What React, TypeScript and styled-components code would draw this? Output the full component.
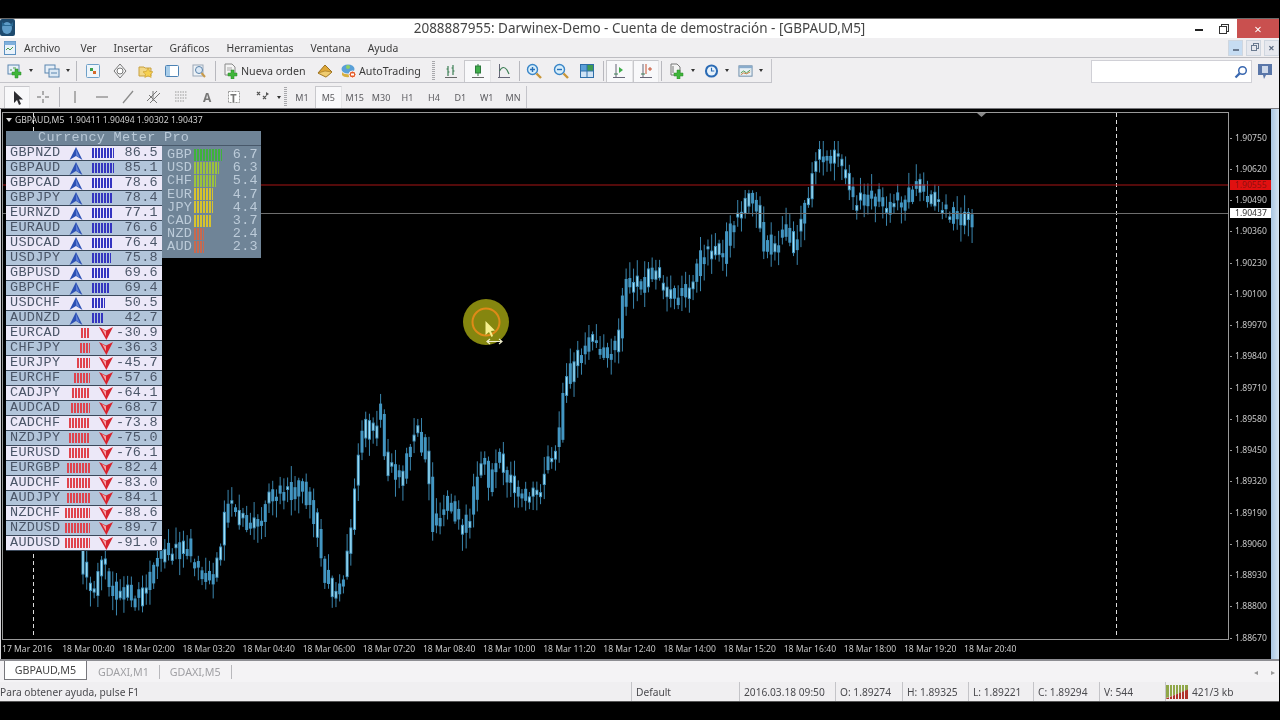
import React from 'react';
import styled, { createGlobalStyle } from 'styled-components';

const GlobalStyle = createGlobalStyle`
  html, body { margin: 0; padding: 0; background: #000; overflow: hidden; }
  * { box-sizing: border-box; }
`;

// data
const pairs: [string, number][] = [
  ['GBPNZD', 86.5], ['GBPAUD', 85.1], ['GBPCAD', 78.6], ['GBPJPY', 78.4], ['EURNZD', 77.1],
  ['EURAUD', 76.6], ['USDCAD', 76.4], ['USDJPY', 75.8], ['GBPUSD', 69.6], ['GBPCHF', 69.4],
  ['USDCHF', 50.5], ['AUDNZD', 42.7], ['EURCAD', -30.9], ['CHFJPY', -36.3], ['EURJPY', -45.7],
  ['EURCHF', -57.6], ['CADJPY', -64.1], ['AUDCAD', -68.7], ['CADCHF', -73.8], ['NZDJPY', -75.0],
  ['EURUSD', -76.1], ['EURGBP', -82.4], ['AUDCHF', -83.0], ['AUDJPY', -84.1], ['NZDCHF', -88.6],
  ['NZDUSD', -89.7], ['AUDUSD', -91.0],
];

const strengths: [string, string, number, string][] = [
  ['GBP', '6.7', 28, '#3fb23a'], ['USD', '6.3', 25, '#9cc23c'], ['CHF', '5.4', 22, '#9cc23c'],
  ['EUR', '4.7', 19, '#d6c32e'], ['JPY', '4.4', 19, '#d6c32e'], ['CAD', '3.7', 17, '#d6c32e'],
  ['NZD', '2.4', 10, '#c9694f'], ['AUD', '2.3', 10, '#c9694f'],
];

const prices = [
  '1.90750', '1.90620', '1.90490', '1.90360', '1.90230', '1.90100', '1.89970', '1.89840', '1.89710',
  '1.89580', '1.89450', '1.89320', '1.89190', '1.89060', '1.88930', '1.88800', '1.88670',
];

const times = [
  '17 Mar 2016', '18 Mar 00:40', '18 Mar 02:00', '18 Mar 03:20', '18 Mar 04:40', '18 Mar 06:00', '18 Mar 07:20',
  '18 Mar 08:40', '18 Mar 10:00', '18 Mar 11:20', '18 Mar 12:40', '18 Mar 14:00', '18 Mar 15:20', '18 Mar 16:40',
  '18 Mar 18:00', '18 Mar 19:20', '18 Mar 20:40',
];

// price path read off the chart, x / y in page pixels
const path: [number, number][] = [
  [83, 570], [92, 597], [103, 560], [112, 590], [125, 590], [138, 603], [147, 587], [157, 557], [167, 553], [180, 553],
  [187, 547], [197, 572], [213, 580], [223, 533], [228, 500], [240, 522], [263, 522], [268, 490], [283, 497], [303, 487],
  [315, 523], [322, 570], [333, 597], [342, 587], [350, 537], [357, 457], [363, 427], [372, 433], [382, 410], [385, 463],
  [403, 483], [408, 450], [418, 427], [428, 473], [433, 530], [447, 503], [467, 533], [475, 490], [483, 453], [488, 483],
  [500, 460], [518, 500], [540, 493], [550, 457], [558, 447], [563, 397], [573, 367], [587, 343], [607, 353], [618, 343],
  [625, 283], [640, 287], [650, 270], [672, 297], [692, 290], [700, 257], [723, 253], [737, 213], [753, 197], [763, 243],
  [773, 250], [788, 230], [795, 250], [802, 210], [810, 197], [813, 158], [833, 157], [845, 173], [853, 203], [867, 197],
  [887, 207], [900, 202], [917, 187], [930, 200], [940, 210], [953, 218], [965, 222], [973, 217],
];

const pathY = (x: number) => {
  for (let i = 1; i < path.length; i++) {
    if (x <= path[i][0]) {
      const [x0, y0] = path[i - 1];
      const [x1, y1] = path[i];
      return y0 + ((y1 - y0) * (x - x0)) / (x1 - x0);
    }
  }
  return path[path.length - 1][1];
};

const makeCandles = () => {
  let seed = 4711;
  const rnd = () => {
    seed = (seed * 16807) % 2147483647;
    return seed / 2147483647;
  };
  const out: { x: number; top: number; bottom: number; hi: number; lo: number; light: boolean }[] = [];
  for (let x = 83; x <= 973; x += 3.72) {
    const a = pathY(x - 3.72) + (rnd() - 0.5) * 16;
    const b = pathY(x) + (rnd() - 0.5) * 16;
    const top = Math.max(Math.min(a, b) - rnd() * 4, 150);
    const bottom = Math.max(a, b) + rnd() * 4;
    out.push({
      x,
      top,
      bottom,
      hi: Math.max(top - 2 - rnd() * 15, 142),
      lo: Math.min(bottom + 2 + rnd() * 15, 627),
      light: rnd() > 0.55,
    });
  }
  return out;
};

const candles = makeCandles();

const CandleChart = () => (
  <ChartSvg viewBox="3 114 1225 525">
    <line x1="33.5" x2="33.5" y1="114" y2="640" stroke="#ddd" strokeDasharray="4 3" />
    <line x1="1116.5" x2="1116.5" y1="114" y2="640" stroke="#ddd" strokeDasharray="4 3" />
    {candles.map((c) => (
      <g key={c.x}>
        <line x1={c.x} x2={c.x} y1={c.hi} y2={c.lo} stroke="#3a86ae" strokeWidth="1" />
        <rect x={c.x - 1.5} y={c.top} width="3" height={c.bottom - c.top} fill="#4396c2" />
        {c.light && <rect x={c.x - 0.6} y={c.top + 1} width="1.2" height={Math.max(c.bottom - c.top - 2, 1)} fill="#a4e2f8" />}
      </g>
    ))}
    <line x1="3" x2="1228" y1="186" y2="186" stroke="#a81414" strokeWidth="1.2" />
    <line x1="3" x2="1228" y1="214.5" y2="214.5" stroke="#6e6e6e" />
    <polygon points="977,114 986,114 981.5,118" fill="#8a8a8a" />
    <circle cx="486" cy="323" r="23" fill="#85860f" />
    <circle cx="486" cy="323" r="13.5" fill="none" stroke="#df8a18" strokeWidth="2" />
    <polygon points="485.5,322 485.5,336 489,333 491.5,338 493,337 491,332 495,331.5" fill="#f6f08e" />
    <path d="M488 342.5h13M490 340l-3 2.5 3 2.5M499 340l3 2.5-3 2.5" fill="none" stroke="#f3f1cf" strokeWidth="1.2" />
  </ChartSvg>
);

// icons
const Svg = ({ children, w = 16 }: { children: React.ReactNode; w?: number }) => (
  <svg width={w} height="16" viewBox={`0 0 ${w} 16`}>{children}</svg>
);

const GreenPlus = ({ x = 8, y = 8 }: { x?: number; y?: number }) => (
  <path d={`M${x + 2} ${y - 1}h3v3h3v3h-3v3h-3v-3h-3v-3h3z`} fill="#3fb53a" stroke="#2a8a2a" strokeWidth=".5" />
);

const NewChartIcon = () => (
  <Svg>
    <rect x="1" y="2" width="11" height="9" fill="#e8f0f8" stroke="#5a86b0" />
    <path d="M3 7h2M6 5h3" stroke="#4a9a4a" />
    <GreenPlus x={6} y={7} />
  </Svg>
);
const ProfileIcon = () => (
  <Svg>
    <rect x="1" y="2" width="10" height="8" fill="#e8f0f8" stroke="#5a86b0" />
    <rect x="5" y="6" width="10" height="8" fill="#dbe8f4" stroke="#5a86b0" />
    <path d="M7 10h6" stroke="#5a86b0" />
  </Svg>
);
const WatchIcon = () => (
  <Svg>
    <rect x="1.5" y="1.5" width="13" height="13" rx="1" fill="#eef5fb" stroke="#6ea0c8" />
    <rect x="5" y="5" width="3" height="3" fill="#3aa04a" />
    <rect x="8" y="8" width="3" height="3" fill="#d66a2a" />
  </Svg>
);
const CrossIcon = () => (
  <Svg>
    <path d="M8 1l6 7-6 7-6-7z" fill="#f4f4f6" stroke="#777" />
    <circle cx="8" cy="8" r="3" fill="#fff" stroke="#777" />
  </Svg>
);
const FoldersIcon = () => (
  <Svg>
    <path d="M1 4h5l1 1h6v8H1z" fill="#f2d888" stroke="#c8a040" />
    <path d="M10 5l1.6 3.4 3.4.4-2.5 2.3.7 3.4-3.2-1.7-3.2 1.7.7-3.4L5 8.8l3.4-.4z" fill="#f6d050" stroke="#c89a28" strokeWidth=".6" />
  </Svg>
);
const NavIcon = () => (
  <Svg>
    <rect x="1.5" y="2.5" width="13" height="11" rx="1" fill="#fff" stroke="#4c82b4" />
    <rect x="2" y="3" width="4" height="10" fill="#a8cdea" />
  </Svg>
);
const TesterIcon = () => (
  <Svg>
    <rect x="2" y="2" width="10" height="11" fill="#eef2f6" stroke="#9aa8b8" />
    <circle cx="8" cy="7" r="3.5" fill="#dce9f6" stroke="#5a82aa" />
    <path d="M10.5 10l3.5 4" stroke="#c89a4a" strokeWidth="2" />
  </Svg>
);
const OrderIcon = () => (
  <Svg>
    <path d="M2 1h7l3 3v8H2z" fill="#f4f4f4" stroke="#888" />
    <path d="M4 5h5M4 7h5" stroke="#aaa" />
    <GreenPlus x={6} y={8} />
  </Svg>
);
const GoldIcon = () => (
  <Svg>
    <path d="M1 10l7-8 7 7-6 5z" fill="#dfa838" stroke="#9a7020" />
    <path d="M1 10l8 4 6-5-7-1z" fill="#f0cc70" stroke="#9a7020" strokeWidth=".6" />
  </Svg>
);
const AutoIcon = () => (
  <Svg>
    <ellipse cx="7" cy="6" rx="6.5" ry="4.5" fill="#5aa0d8" />
    <path d="M1 9c2 3 9 3 11 0v3c-2 3-9 3-11 0z" fill="#d8b040" />
    <circle cx="7" cy="4" r="2" fill="#8ed060" />
    <circle cx="11.5" cy="11.5" r="3.5" fill="#e45a28" stroke="#fff" />
    <rect x="10" y="10.5" width="3" height="2" fill="#fff" />
  </Svg>
);
const BarsIcon = () => (
  <Svg>
    <path d="M2 14.5h12" stroke="#666" />
    <path d="M5 3v10M3.5 6H5M5 9h1.5M10 2v10M8.5 5H10M10 8h1.5" stroke="#3d7f55" strokeWidth="1.2" />
  </Svg>
);
const CandleIcon = () => (
  <Svg>
    <path d="M2 14.5h12" stroke="#666" />
    <path d="M8 1v12" stroke="#2d7a3d" />
    <rect x="5.5" y="3" width="5" height="7" fill="#3fae4a" stroke="#2d7a3d" />
  </Svg>
);
const LineIcon = () => (
  <Svg>
    <path d="M2 14.5h12M3.5 1v13" stroke="#667" />
    <path d="M3.5 8C6 3 9 4 11 7l2 4" fill="none" stroke="#3d7f55" strokeWidth="1.2" />
  </Svg>
);
const ZoomIcon = ({ plus }: { plus?: boolean }) => (
  <Svg>
    <circle cx="6.5" cy="6.5" r="5" fill="#d8eefa" stroke="#3a86c8" strokeWidth="1.4" />
    <path d="M10.5 10.5L15 15" stroke="#c8963a" strokeWidth="2.4" />
    <path d={plus ? 'M4 6.5h5M6.5 4v5' : 'M4 6.5h5'} stroke="#2a70b8" strokeWidth="1.4" />
  </Svg>
);
const TileIcon = () => (
  <Svg>
    <rect x="1" y="1" width="14" height="14" fill="#2f6ea8" />
    <rect x="2" y="2" width="5.5" height="5.5" fill="#5b9fd8" />
    <rect x="8.5" y="2" width="5.5" height="5.5" fill="#3f9a52" />
    <rect x="2" y="8.5" width="5.5" height="5.5" fill="#cfe3f5" />
    <rect x="8.5" y="8.5" width="5.5" height="5.5" fill="#cfe3f5" />
  </Svg>
);
const ShiftIcon = ({ plus }: { plus?: boolean }) => (
  <Svg>
    <path d="M2 14.5h12M5 1v13" stroke="#667" />
    <path d="M3 11h4" stroke="#3d7f55" />
    {plus ? <path d="M8 1v10M10 6h4M12 4v4" stroke="#c85030" /> : <path d="M8 4l4 3-4 3z" fill="#3fae4a" />}
  </Svg>
);
const NewDocIcon = () => (
  <Svg>
    <path d="M2 1h6l3 3v8H2z" fill="#f4f4f4" stroke="#777" />
    <path d="M4 3v7" stroke="#777" />
    <GreenPlus x={6} y={8} />
  </Svg>
);
const ClockIcon = () => (
  <Svg>
    <circle cx="8" cy="8" r="7" fill="#2a6ab4" />
    <circle cx="8" cy="8" r="4.8" fill="#e8f2fb" />
    <path d="M8 4.5V8h3" fill="none" stroke="#2a6ab4" strokeWidth="1.2" />
  </Svg>
);
const TemplateIcon = () => (
  <Svg>
    <rect x="1" y="2.5" width="14" height="11" fill="#e8f0f6" stroke="#6a8aa8" />
    <rect x="1" y="2.5" width="14" height="2.5" fill="#8aaccc" />
    <path d="M3 10l3-2 3 2 4-3" fill="none" stroke="#4a9a4a" />
    <path d="M3 12l3-2 3 1 4-2" fill="none" stroke="#c87a3a" />
  </Svg>
);
const PointerIcon = () => (
  <Svg>
    <path d="M5 1v12l3-3 2 5 2-1-2-4.6h4z" fill="#2c2c30" />
  </Svg>
);
const GraphCross = () => (
  <Svg>
    <path d="M8 2v4M8 10v4M2 8h4M10 8h4" stroke="#666" />
  </Svg>
);
const DrawLine = ({ d }: { d: string }) => (
  <Svg>
    <path d={d} stroke="#8a8a8a" strokeWidth="1.3" fill="none" />
  </Svg>
);
const ChannelIcon = () => (
  <Svg>
    <path d="M1 12L11 2M4 14L14 4M3 6l8 8M7 2v10" stroke="#777" fill="none" />
  </Svg>
);
const FiboIcon = () => (
  <Svg>
    <path d="M2 3h12M2 6h12M2 9h12M2 12h9" stroke="#999" strokeDasharray="1.5 1" fill="none" />
  </Svg>
);
const TextBoxIcon = () => (
  <Svg>
    <rect x="2.5" y="2.5" width="11" height="11" fill="#fff" stroke="#999" strokeDasharray="2 1" />
  </Svg>
);
const ShapesIcon = () => (
  <Svg>
    <path d="M2 3l3 3M5 3L2 6M8 7l3 3M11 7l-3 3" stroke="#555" strokeWidth="1.3" />
    <path d="M11 3l3 2-3 2z" fill="#555" />
  </Svg>
);
const MdiAppIcon = () => (
  <Svg>
    <rect x="2.5" y="1.5" width="11" height="13" fill="#eaf2fa" stroke="#5a90c0" />
    <rect x="2.5" y="1.5" width="11" height="3.5" fill="#7fb0dc" />
    <path d="M4 10l2-2 2 2 3-3" fill="none" stroke="#4a9a4a" />
  </Svg>
);
const AppLogo = () => (
  <svg width="15" height="17" viewBox="0 0 15 17">
    <rect x="0" y="0" width="15" height="17" rx="2" fill="#1d4a6e" />
    <ellipse cx="7" cy="9" rx="5" ry="6" fill="#5e9cc8" />
    <path d="M2 3l3 3h5l3-3v4H2z" fill="#2a6a94" />
  </svg>
);
const ChatBadge = () => (
  <svg width="16" height="18" viewBox="0 0 16 18">
    <path d="M1 1h14v11H9l-2 4-1-4H1z" fill="#5a76a8" />
    <rect x="5" y="3" width="6" height="7" fill="#cfd9ea" />
  </svg>
);
const SearchGlyph = () => (
  <svg width="14" height="14" viewBox="0 0 14 14">
    <circle cx="8.5" cy="5.5" r="3.8" fill="#fff" stroke="#3a68b0" strokeWidth="1.5" />
    <path d="M5.6 8.4L1.5 12.5" stroke="#3a68b0" strokeWidth="2.2" />
  </svg>
);
const ArrowUp = () => (
  <svg width="14" height="13" viewBox="0 0 14 13">
    <path d="M7 0l6.5 13L7 9 .5 13z" fill="#2c50b4" />
    <path d="M7 2v6.6l3.6 2.2z" fill="#5f7fd6" />
  </svg>
);
const ArrowDown = () => (
  <svg width="14" height="14" viewBox="0 0 14 14">
    <path d="M0 1l7 3.4L14 1 7.4 14z" fill="#d8242e" />
    <path d="M3 3l4 2.2v5z" fill="#f3a2a6" />
  </svg>
);
const NetBars = () => (
  <svg width="22" height="14" viewBox="0 0 22 14">
    <path d="M0 0h22v5L0 13z" fill="#7f9a2c" opacity=".85" />
    <path d="M0 13.5l22-9V14H0z" fill="#b0322a" />
    {[3, 6, 9, 12, 15, 18].map((x) => (
      <rect key={x} x={x} y="0" width="1" height="14" fill="#f0eff1" />
    ))}
  </svg>
);

// layout
const Page = styled.div`
  width: 1280px;
  height: 720px;
  background: #000;
  display: flex;
  flex-direction: column;
  font-family: 'Noto Sans', 'Liberation Sans', sans-serif;
  filter: blur(0.45px);
  overflow: hidden;
`;

const Letterbox = styled.div<{ $h: number }>`
  height: ${({ $h }) => $h}px;
  flex: none;
  background: #000;
`;

const AppWindow = styled.div`
  flex: 1;
  width: 1279px;
  display: flex;
  flex-direction: column;
  background: #f0eff1;
  border-top: 1px solid #6c6c6c;
  border-bottom: 1px solid #555;
  min-height: 0;
`;

const TitleBar = styled.div`
  height: 19px;
  flex: none;
  background: #fff;
  display: flex;
  align-items: stretch;
  position: relative;
`;

const TitleText = styled.div`
  text-align: center;
  font-size: 13.5px;
  line-height: 19px;
  color: #444;
  position: absolute;
  left: 0;
  right: 0;
`;

const LogoSlot = styled.div`
  width: 15px;
  z-index: 1;
`;

const WinControls = styled.div`
  margin-left: auto;
  display: flex;
  align-items: stretch;
  z-index: 1;
`;

const WinBtn = styled.div<{ $close?: boolean }>`
  width: ${({ $close }) => ($close ? '42px' : '24px')};
  display: flex;
  align-items: center;
  justify-content: center;
  padding-right: ${({ $close }) => ($close ? 0 : 4)}px;
  background: ${({ $close }) => ($close ? '#c9504f' : 'transparent')};
  color: ${({ $close }) => ($close ? '#fff' : '#222')};
  font-size: 13px;
`;

const MinGlyph = styled.span`
  width: 8px;
  height: 2px;
  margin-top: 3px;
  background: #222;
`;

const RestoreGlyph = styled.span`
  width: 8px;
  height: 8px;
  margin-top: 2px;
  border: 1px solid #333;
  box-shadow: 2px -2px 0 -1px #f8f8f8, 2px -2px 0 0 #333;
`;

const MenuBar = styled.div`
  height: 20px;
  flex: none;
  display: flex;
  align-items: center;
  border-bottom: 1px solid #bdbdc2;
  padding-left: 2px;
  font-size: 10.4px;
  color: #3c3c3c;
  gap: 17px;
`;

const MenuIcon = styled.div`
  width: 16px;
  height: 16px;
  margin-right: -11px;
`;

const FirstMenu = styled.span`
  margin-right: 3px;
`;

const MdiControls = styled.div`
  margin-left: auto;
  display: flex;
  gap: 3px;
`;

const MdiBtn = styled.div<{ $plain?: boolean }>`
  width: 15px;
  height: 16px;
  display: flex;
  align-items: center;
  justify-content: center;
  background: ${({ $plain }) => ($plain ? '#e6e8ee' : '#c6dcf2')};
  border: 1px solid #cfd6df;
  color: #5a6a80;
  font-size: 11px;
  font-weight: 700;
`;

const MdiDash = styled.span`
  width: 6px;
  height: 2px;
  margin-top: 5px;
  background: #6a7a90;
`;

const MdiRestore = styled.span`
  width: 6px;
  height: 6px;
  border: 1px solid #6a7a90;
  box-shadow: 2px -2px 0 -1px #e6e8ee, 2px -2px 0 0 #6a7a90;
`;

const ToolbarRow = styled.div<{ $h: number; $top: number; $dark?: boolean }>`
  height: ${({ $h }) => $h}px;
  flex: none;
  display: flex;
  align-items: stretch;
  padding-top: ${({ $top }) => $top}px;
  border-bottom: 1px solid ${({ $dark }) => ($dark ? '#77777c' : '#f0eff1')};
`;

const Toolbar = styled.div<{ $pad: number; $w: number; $line?: boolean }>`
  width: ${({ $w }) => $w}px;
  display: flex;
  align-items: center;
  padding-left: ${({ $pad }) => $pad}px;
  border-right: 1px solid #c4c4ca;
  border-bottom: ${({ $line }) => ($line ? '1px solid #c4c4ca' : 'none')};
`;

const ToolBtn = styled.div<{ $w?: number; $pressed?: boolean; $pl?: number }>`
  flex: none;
  width: ${({ $w = 26.4 }) => $w}px;
  height: 22px;
  display: flex;
  align-items: center;
  justify-content: ${({ $pl }) => ($pl != null ? 'flex-start' : 'center')};
  padding-left: ${({ $pl = 0 }) => $pl}px;
  gap: 2px;
  font-size: 10.7px;
  color: #3c3c3c;
  white-space: nowrap;
  ${({ $pressed }) =>
    $pressed &&
    `background: #f8f8fa;
     border-top: 1px solid #c8c8cc;
     border-left: 1px solid #c8c8cc;
     border-right: 1px solid #e4e4e6;`}
`;

const PeriodLabel = styled.span`
  font-size: 9px;
  color: #5c5c60;
`;

const DrawA = styled.span`
  font-size: 12px;
  font-weight: 700;
  color: #777;
`;

const TextT = styled.span`
  position: absolute;
  font-size: 11px;
  font-weight: 700;
  color: #777;
`;

const Caret = styled.span`
  width: 0;
  height: 0;
  border-left: 2.5px solid transparent;
  border-right: 2.5px solid transparent;
  border-top: 3px solid #333;
  margin-left: 4px;
`;

const Sep = styled.div<{ $w?: number; $grip?: boolean }>`
  flex: none;
  width: ${({ $w = 6 }) => $w}px;
  height: 20px;
  display: flex;
  justify-content: center;
  &::after {
    content: '';
    width: ${({ $grip }) => ($grip ? '3px' : '1px')};
    background: ${({ $grip }) =>
      $grip ? 'repeating-linear-gradient(to bottom, #a8a8ac 0 1px, transparent 1px 2px)' : '#b8b8be'};
  }
`;

const SearchBox = styled.div`
  position: absolute;
  left: 1091px;
  top: 60px;
  width: 161px;
  height: 23px;
  background: #fff;
  border: 1px solid #d0d0d6;
  display: flex;
  align-items: center;
  justify-content: flex-end;
  padding-right: 3px;
`;

const ChatSlot = styled.div`
  position: absolute;
  left: 1257px;
  top: 63px;
`;

const ChartRow = styled.div`
  flex: 1;
  display: flex;
  min-height: 0;
`;

const ChartArea = styled.div`
  flex: 1;
  background: #000;
  display: grid;
  grid-template-columns: 1228px 1fr;
  grid-template-rows: 528px 1fr;
  padding: 3px 0 0 1px;
  border-left: 1px solid #d8d8dc;
`;

const ScrollStrip = styled.div`
  width: 8px;
  flex: none;
  background: linear-gradient(to right, #a9c6e2, #d5e4f2);
`;

const Plot = styled.div`
  position: relative;
  width: 1227px;
  border: 1px solid #9a9a9a;
`;

const ChartSvg = styled.svg`
  position: absolute;
  left: 0;
  top: 0;
  width: 1225px;
  height: 525px;
`;

const ChartHeader = styled.div`
  position: absolute;
  left: 3px;
  top: 1px;
  display: flex;
  align-items: center;
  gap: 3px;
  font-size: 8.6px;
  line-height: 12px;
  color: #d0d0d0;
  white-space: nowrap;
`;

const HeaderCaret = styled.span`
  width: 0;
  height: 0;
  border-left: 3.5px solid transparent;
  border-right: 3.5px solid transparent;
  border-top: 4px solid #ddd;
`;

const Meter = styled.div`
  position: absolute;
  left: 3px;
  top: 18px;
  width: 255px;
  font-family: 'Liberation Mono', monospace;
`;

const MeterTitle = styled.div`
  height: 15px;
  background: #6f8497;
  color: #b9c9d8;
  font-size: 13.5px;
  letter-spacing: 0.3px;
  line-height: 14px;
  padding-left: 32px;
  border-bottom: 1px solid #48586a;
`;

const MeterBody = styled.div`
  display: flex;
  align-items: flex-start;
`;

const PairList = styled.div`
  width: 156px;
  flex: none;
  background: #2a3442;
`;

const PairRow = styled.div<{ $alt: boolean }>`
  height: 15px;
  display: grid;
  grid-template-columns: 55px 25px 26px 1fr;
  align-items: center;
  padding: 0 4px 1px 4px;
  border-bottom: 1px solid #3c4a5c;
  background: ${({ $alt }) => ($alt ? '#b2c5da' : '#ece8f8')};
  color: #4b5668;
  font-size: 13.5px;
  letter-spacing: 0.3px;
  line-height: 14px;
`;

const SlotLeft = styled.div`
  display: flex;
  justify-content: flex-end;
  align-items: center;
`;

const SlotRight = styled.div`
  display: flex;
  align-items: center;
  padding-left: 2px;
`;

const Value = styled.div`
  text-align: right;
  white-space: nowrap;
`;

const Ticks = styled.div<{ $w: number; $c: string; $h?: number }>`
  width: ${({ $w }) => $w}px;
  height: ${({ $h = 10 }) => $h}px;
  background: repeating-linear-gradient(to right, ${({ $c }) => $c} 0 2px, transparent 2px 3px);
`;

const ArrowSlot = styled.div<{ $left: number }>`
  display: flex;
  padding-left: ${({ $left }) => $left}px;
`;

const StrengthPanel = styled.div`
  flex: 1;
  background: #6f8497;
  color: #bccbd9;
  padding: 2px 3px 4px 5px;
  font-size: 13.5px;
  letter-spacing: 0.3px;
`;

const StrengthRow = styled.div`
  height: 13.2px;
  display: grid;
  grid-template-columns: 27px 1fr auto;
  align-items: center;
  line-height: 13px;
`;

const PriceAxis = styled.div`
  position: relative;
  padding-top: 10px;
`;

const PriceTick = styled.div`
  height: 31.25px;
  display: flex;
  align-items: center;
  font-size: 8.6px;
  color: #c8c8c8;
  padding-left: 5px;
  position: relative;
  &::before {
    content: '';
    position: absolute;
    left: 0;
    top: 50%;
    width: 2px;
    height: 1px;
    background: #999;
  }
`;

const PriceTag = styled.div<{ $top: number; $bg: string; $fg: string }>`
  position: absolute;
  left: 0;
  top: ${({ $top }) => $top}px;
  width: 41px;
  height: 10px;
  background: ${({ $bg }) => $bg};
  color: ${({ $fg }) => $fg};
  font-size: 8.6px;
  line-height: 10px;
  padding-left: 5px;
`;

const TimeAxis = styled.div`
  display: flex;
  grid-column: 1 / 3;
  padding-top: 2px;
`;

const TimeTick = styled.div`
  width: 60.13px;
  flex: none;
  font-size: 8.6px;
  line-height: 12px;
  padding-top: 1px;
  color: #c8c8c8;
  white-space: nowrap;
`;

const TabBar = styled.div`
  height: 23px;
  flex: none;
  display: flex;
  align-items: center;
  background: #f4f3f5;
  border-top: 2px solid #8d8d92;
  padding-left: 4px;
  font-size: 10.7px;
  color: #a0a0a4;
`;

const ActiveTab = styled.div`
  width: 83px;
  height: 19px;
  margin-top: -2px;
  background: #fff;
  color: #444;
  border: 1px solid #77777c;
  border-top: none;
  text-align: center;
  line-height: 18px;
  margin-right: 11px;
`;

const Tab = styled.div`
  margin-right: 10px;
`;

const TabSep = styled.div`
  width: 1px;
  height: 14px;
  background: #b8b8bc;
  margin-right: 10px;
`;

const TabArrows = styled.div`
  margin-left: auto;
  display: flex;
  gap: 13px;
  padding-right: 4px;
  font-size: 8px;
  color: #999;
`;

const StatusBar = styled.div`
  height: 19px;
  flex: none;
  display: flex;
  align-items: center;
  font-size: 10.2px;
  color: #4a4a4e;
  background: #f0eff1;
  white-space: nowrap;
`;

const StatusHelp = styled.div`
  width: 631px;
  flex: none;
`;

const StatusCell = styled.div<{ $w: number; $pl?: number }>`
  width: ${({ $w }) => $w}px;
  flex: none;
  height: 100%;
  display: flex;
  align-items: center;
  gap: 4px;
  padding-left: ${({ $pl = 4 }) => $pl}px;
  border-left: 1px solid #c4c4c8;
`;

const TopLeftTools = () => (
  <Toolbar $pad={6} $w={772} $line>
    <ToolBtn $w={30} $pl={1}><NewChartIcon /><Caret /></ToolBtn>
    <ToolBtn $w={36} $pl={8}><ProfileIcon /><Caret /></ToolBtn>
    <Sep $w={8} />
    <ToolBtn><WatchIcon /></ToolBtn>
    <ToolBtn><CrossIcon /></ToolBtn>
    <ToolBtn><FoldersIcon /></ToolBtn>
    <ToolBtn><NavIcon /></ToolBtn>
    <ToolBtn><TesterIcon /></ToolBtn>
    <Sep $w={8} />
    <ToolBtn $w={92} $pl={3}><OrderIcon />Nueva orden</ToolBtn>
    <ToolBtn $w={26}><GoldIcon /></ToolBtn>
    <ToolBtn $w={92} $pl={3}><AutoIcon />AutoTrading</ToolBtn>
    <Sep $w={8} $grip />
    <ToolBtn><BarsIcon /></ToolBtn>
    <ToolBtn $pressed><CandleIcon /></ToolBtn>
    <ToolBtn><LineIcon /></ToolBtn>
    <Sep $w={4} />
    <ToolBtn><ZoomIcon plus /></ToolBtn>
    <ToolBtn><ZoomIcon /></ToolBtn>
    <ToolBtn><TileIcon /></ToolBtn>
    <Sep />
    <ToolBtn $pressed><ShiftIcon /></ToolBtn>
    <ToolBtn $pressed><ShiftIcon plus /></ToolBtn>
    <Sep $w={4} />
    <ToolBtn $w={33} $pl={6}><NewDocIcon /><Caret /></ToolBtn>
    <ToolBtn $w={33} $pl={8}><ClockIcon /><Caret /></ToolBtn>
    <ToolBtn $w={34} $pl={9}><TemplateIcon /><Caret /></ToolBtn>
  </Toolbar>
);

const LowerTools = () => (
  <Toolbar $pad={4} $w={527}>
    <ToolBtn $w={26} $pressed><PointerIcon /></ToolBtn>
    <ToolBtn $w={26}><GraphCross /></ToolBtn>
    <Sep />
    <ToolBtn><DrawLine d="M8 2v12" /></ToolBtn>
    <ToolBtn><DrawLine d="M2 8h12" /></ToolBtn>
    <ToolBtn><DrawLine d="M3 14L13 2" /></ToolBtn>
    <ToolBtn><ChannelIcon /></ToolBtn>
    <ToolBtn><FiboIcon /></ToolBtn>
    <ToolBtn><DrawA>A</DrawA></ToolBtn>
    <ToolBtn><TextBoxIcon /><TextT>T</TextT></ToolBtn>
    <ToolBtn $w={36} $pl={8}><ShapesIcon /><Caret /></ToolBtn>
    <Sep $grip />
    {['M1', 'M5', 'M15', 'M30', 'H1', 'H4', 'D1', 'W1', 'MN'].map((p) => (
      <ToolBtn key={p} $pressed={p === 'M5'}><PeriodLabel>{p}</PeriodLabel></ToolBtn>
    ))}
  </Toolbar>
);

export default function App() {
  return (
    <Page>
      <GlobalStyle />
      <Letterbox $h={18} />
      <AppWindow>
        <TitleBar>
          <LogoSlot><AppLogo /></LogoSlot>
          <TitleText>2088887955: Darwinex-Demo - Cuenta de demostración - [GBPAUD,M5]</TitleText>
          <WinControls>
            <WinBtn><MinGlyph /></WinBtn>
            <WinBtn><RestoreGlyph /></WinBtn>
            <WinBtn $close>×</WinBtn>
          </WinControls>
        </TitleBar>
        <MenuBar>
          <MenuIcon><MdiAppIcon /></MenuIcon>
          <FirstMenu>Archivo</FirstMenu>
          <span>Ver</span>
          <span>Insertar</span>
          <span>Gráficos</span>
          <span>Herramientas</span>
          <span>Ventana</span>
          <span>Ayuda</span>
          <MdiControls>
            <MdiBtn><MdiDash /></MdiBtn>
            <MdiBtn $plain><MdiRestore /></MdiBtn>
            <MdiBtn $plain>×</MdiBtn>
          </MdiControls>
        </MenuBar>
        <ToolbarRow $h={26} $top={1}><TopLeftTools /></ToolbarRow>
        <ToolbarRow $h={25} $top={2} $dark><LowerTools /></ToolbarRow>
        <SearchBox><SearchGlyph /></SearchBox>
        <ChatSlot><ChatBadge /></ChatSlot>
        <ChartRow>
          <ChartArea>
            <Plot>
              <CandleChart />
              <ChartHeader>
                <HeaderCaret />
                GBPAUD,M5&nbsp; 1.90411 1.90494 1.90302 1.90437
              </ChartHeader>
              <Meter>
                <MeterTitle>Currency Meter Pro</MeterTitle>
                <MeterBody>
                  <PairList>
                    {pairs.map(([name, v], i) => (
                      <PairRow key={name} $alt={i % 2 === 1}>
                        <span>{name}</span>
                        {v > 0 ? (
                          <>
                            <ArrowSlot $left={4}><ArrowUp /></ArrowSlot>
                            <SlotRight><Ticks $w={Math.round(v / 3.9)} $c="#3535c0" /></SlotRight>
                          </>
                        ) : (
                          <>
                            <SlotLeft><Ticks $w={Math.round(-v / 3.6)} $c="#e0444e" /></SlotLeft>
                            <ArrowSlot $left={9}><ArrowDown /></ArrowSlot>
                          </>
                        )}
                        <Value>{v.toFixed(1)}</Value>
                      </PairRow>
                    ))}
                  </PairList>
                  <StrengthPanel>
                    {strengths.map(([cur, val, w, c]) => (
                      <StrengthRow key={cur}>
                        <span>{cur}</span>
                        <Ticks $w={w} $c={c} $h={12} />
                        <span>{val}</span>
                      </StrengthRow>
                    ))}
                  </StrengthPanel>
                </MeterBody>
              </Meter>
            </Plot>
            <PriceAxis>
              {prices.map((p) => (
                <PriceTick key={p}>{p}</PriceTick>
              ))}
              <PriceTag $top={68} $bg="#e01010" $fg="#8c1010">1.90555</PriceTag>
              <PriceTag $top={96} $bg="#fff" $fg="#333">1.90437</PriceTag>
            </PriceAxis>
            <TimeAxis>
              {times.map((t) => (
                <TimeTick key={t}>{t}</TimeTick>
              ))}
            </TimeAxis>
          </ChartArea>
          <ScrollStrip />
        </ChartRow>
        <TabBar>
          <ActiveTab>GBPAUD,M5</ActiveTab>
          <Tab>GDAXI,M1</Tab>
          <TabSep />
          <Tab>GDAXI,M5</Tab>
          <TabSep />
          <TabArrows><span>◂</span><span>▸</span></TabArrows>
        </TabBar>
        <StatusBar>
          <StatusHelp>Para obtener ayuda, pulse F1</StatusHelp>
          <StatusCell $w={108}>Default</StatusCell>
          <StatusCell $w={96}>2016.03.18 09:50</StatusCell>
          <StatusCell $w={67}>O: 1.89274</StatusCell>
          <StatusCell $w={66}>H: 1.89325</StatusCell>
          <StatusCell $w={65}>L: 1.89221</StatusCell>
          <StatusCell $w={66}>C: 1.89294</StatusCell>
          <StatusCell $w={66}>V: 544</StatusCell>
          <StatusCell $w={114} $pl={0}><NetBars />421/3 kb</StatusCell>
        </StatusBar>
      </AppWindow>
      <Letterbox $h={18} />
    </Page>
  );
}
